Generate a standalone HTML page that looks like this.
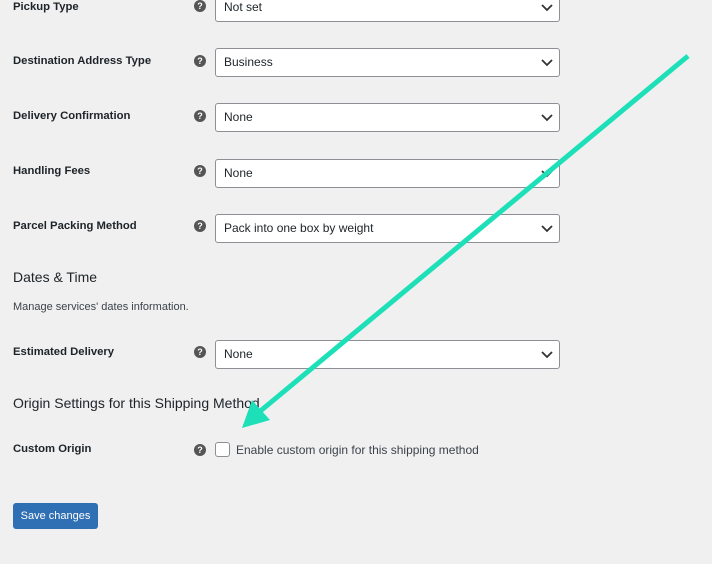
<!DOCTYPE html>
<html><head><style>
body{margin:0;width:712px;height:564px;background:#f0f0f1;font-family:"Liberation Sans",sans-serif;color:#1d2327;position:relative;overflow:hidden}
.l{position:absolute;left:13px;font-size:11.3px;font-weight:bold;line-height:14px}
.h{position:absolute;left:194px;width:12px;height:12px;border-radius:50%;background:#555;color:#fff;font-size:9px;font-weight:bold;text-align:center;line-height:12px}
.s{position:absolute;left:215px;width:343px;height:27px;border:1px solid #8c8f94;border-radius:3px;background:#fff;font-size:12px;line-height:27px;box-sizing:content-box}
.s span{position:absolute;left:8px}
.s svg{position:absolute;right:6px;top:9px}
.t{position:absolute;left:13px;font-size:14px}
</style></head><body>
<div class="l" style="top:0">Pickup Type</div><div class="h" style="top:0">?</div>
<div class="s" style="top:-7px"><span>Not set</span><svg width="12" height="10"><path d="M1 2l5 5 5-5" fill="none" stroke="#333" stroke-width="1.8"/></svg></div>
<div class="l" style="top:54px">Destination Address Type</div><div class="h" style="top:55px">?</div>
<div class="s" style="top:48px"><span>Business</span><svg width="12" height="10"><path d="M1 2l5 5 5-5" fill="none" stroke="#333" stroke-width="1.8"/></svg></div>
<div class="l" style="top:109px">Delivery Confirmation</div><div class="h" style="top:110px">?</div>
<div class="s" style="top:103px"><span>None</span><svg width="12" height="10"><path d="M1 2l5 5 5-5" fill="none" stroke="#333" stroke-width="1.8"/></svg></div>
<div class="l" style="top:164px">Handling Fees</div><div class="h" style="top:165px">?</div>
<div class="s" style="top:159px"><span>None</span><svg width="12" height="10"><path d="M1 2l5 5 5-5" fill="none" stroke="#333" stroke-width="1.8"/></svg></div>
<div class="l" style="top:219px">Parcel Packing Method</div><div class="h" style="top:220px">?</div>
<div class="s" style="top:214px"><span>Pack into one box by weight</span><svg width="12" height="10"><path d="M1 2l5 5 5-5" fill="none" stroke="#333" stroke-width="1.8"/></svg></div>
<div class="t" style="top:269px">Dates &amp; Time</div>
<div style="position:absolute;left:13px;top:301px;font-size:11px;color:#3c434a">Manage services' dates information.</div>
<div class="l" style="top:345px">Estimated Delivery</div><div class="h" style="top:346px">?</div>
<div class="s" style="top:340px"><span>None</span><svg width="12" height="10"><path d="M1 2l5 5 5-5" fill="none" stroke="#333" stroke-width="1.8"/></svg></div>
<div class="t" style="top:395px">Origin Settings for this Shipping Method</div>
<div class="l" style="top:442px">Custom Origin</div><div class="h" style="top:444px">?</div>
<div style="position:absolute;left:215px;top:442px;width:13px;height:13px;border:1px solid #8c8f94;border-radius:3px;background:#fff"></div>
<div style="position:absolute;left:236px;top:443px;font-size:12px;color:#3c434a">Enable custom origin for this shipping method</div>
<div style="position:absolute;left:13px;top:503px;width:85px;height:26px;background:#2f6fb3;border-radius:3px;color:#fff;font-size:11px;text-align:center;line-height:26px">Save changes</div>
<svg style="position:absolute;left:0;top:0" width="712" height="564"><line x1="688" y1="56" x2="258" y2="413" stroke="#1de0b8" stroke-width="5"/><polygon points="242,428 252,400 270,420" fill="#1de0b8"/></svg>
</body></html>
